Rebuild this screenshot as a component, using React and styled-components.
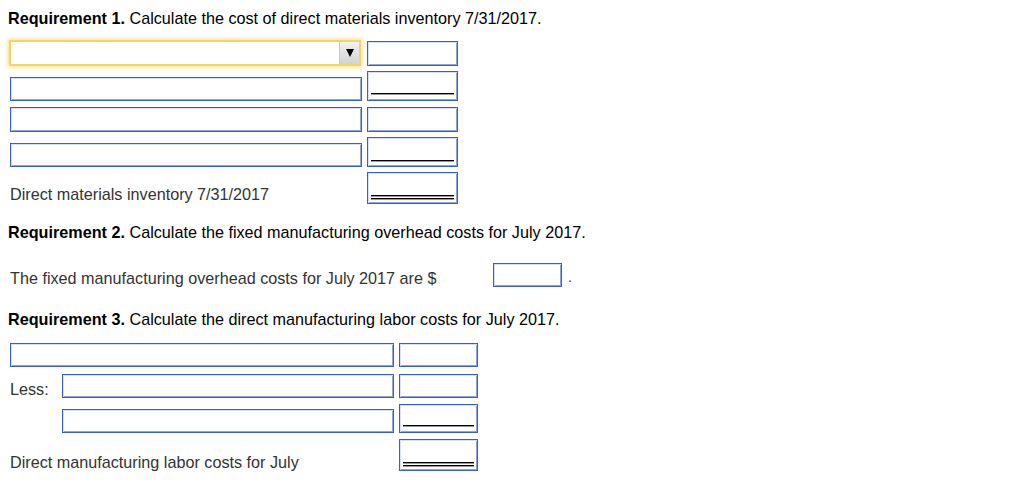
import React from 'react';
import styled, { createGlobalStyle } from 'styled-components';

const GlobalStyle = createGlobalStyle`
  html, body {
    margin: 0;
    padding: 0;
    background: #fff;
  }
  body {
    font-family: "Liberation Sans", Arial, Helvetica, sans-serif;
    color: #000;
  }
`;

const Page = styled.div`
  width: 1024px;
  height: 489px;
  box-sizing: border-box;
  padding: 9px 0 0 8px;
  overflow: hidden;
`;

const Heading = styled.div`
  font-size: 16.2px;
  line-height: 18px;
  margin-top: ${p => p.$top || 0}px;
  white-space: nowrap;
  b {
    font-weight: bold;
  }
`;

const Sheet = styled.div`
  display: grid;
  grid-template-columns: ${p => p.$cols};
  column-gap: 5px;
  align-items: end;
  margin-top: ${p => p.$top || 0}px;
  padding-left: 2px;
`;

const Cell = styled.div`
  display: flex;
  align-items: end;
  grid-column: ${p => p.$span || 'auto'};
  height: ${p => p.$h || 25}px;
  margin-top: ${p => p.$gap || 0}px;
`;

const Label = styled.div`
  font-size: 16.2px;
  line-height: 18px;
  color: #333;
  white-space: nowrap;
  padding-bottom: ${p => p.$pb || 0}px;
`;

const TextBox = styled.div`
  box-sizing: border-box;
  width: ${p => p.$w ? `${p.$w}px` : '100%'};
  height: ${p => p.$h || 24}px;
  border: 1px solid #3a5ec7;
  box-shadow: inset 1px 1px 0 #d7e0f6, inset -1px -1px 0 #8ea5e0;
  background: #fff;
  position: relative;
`;

const Amount = styled(TextBox)`
  width: 100%;
  height: ${p => p.$h || 25}px;
`;

const Rule = styled.div`
  position: absolute;
  left: 3px;
  right: 3px;
  bottom: ${p => p.$bottom}px;
  height: 1px;
  background: #000;
  box-shadow: 0 1px 0 #9a9a9a;
`;

const SelectBox = styled.div`
  box-sizing: border-box;
  width: 100%;
  height: 26px;
  margin-left: -1px;
  border: 2px solid #f3d66a;
  box-shadow: 0 0 4px 1px rgba(245, 215, 90, 0.8);
  background: #fff;
  display: flex;
  justify-content: flex-end;
  align-items: stretch;
`;

const DropButton = styled.div`
  width: 19px;
  display: flex;
  align-items: center;
  justify-content: center;
  background: linear-gradient(#f2f2f2, #d2d2d2);
  border-left: 1px solid #c8c8c8;
`;

const Arrow = styled.span`
  width: 0;
  height: 0;
  border-left: 4px solid transparent;
  border-right: 4px solid transparent;
  border-top: 8px solid #000;
`;

const SentenceRow = styled.div`
  display: flex;
  align-items: center;
  margin-top: ${p => p.$top || 0}px;
  padding-left: 2px;
`;

const Sentence = styled(Label)`
  width: 483px;
  padding-top: 5px;
`;

const Dot = styled.span`
  font-size: 14px;
  color: #333;
  margin-left: 6px;
  padding-top: 4px;
`;

export default function App() {
  return (
    <Page>
      <GlobalStyle />
      <Heading>
        <b>Requirement 1.</b> Calculate the cost of direct materials inventory 7/31/2017.
      </Heading>

      <Sheet $cols="352px 91px" $top={14}>
        <Cell $h={25}>
          <SelectBox>
            <DropButton><Arrow /></DropButton>
          </SelectBox>
        </Cell>
        <Cell $h={25}><Amount /></Cell>

        <Cell $h={30} $gap={5}><TextBox /></Cell>
        <Cell $h={30} $gap={5}>
          <Amount $h={30}><Rule $bottom={6} /></Amount>
        </Cell>

        <Cell $h={25} $gap={6}><TextBox $h={25} /></Cell>
        <Cell $h={25} $gap={6}><Amount /></Cell>

        <Cell $h={30} $gap={5}><TextBox /></Cell>
        <Cell $h={30} $gap={5}>
          <Amount $h={30}><Rule $bottom={5} /></Amount>
        </Cell>

        <Cell $h={32} $gap={5}>
          <Label $pb={1}>Direct materials inventory 7/31/2017</Label>
        </Cell>
        <Cell $h={32} $gap={5}>
          <Amount $h={32}>
            <Rule $bottom={7} />
            <Rule $bottom={4} />
          </Amount>
        </Cell>
      </Sheet>

      <Heading $top={19}>
        <b>Requirement 2.</b> Calculate the fixed manufacturing overhead costs for July 2017.
      </Heading>

      <SentenceRow $top={22}>
        <Sentence>The fixed manufacturing overhead costs for July 2017 are $</Sentence>
        <TextBox $w={69} $h={24} />
        <Dot>.</Dot>
      </SentenceRow>

      <Heading $top={23}>
        <b>Requirement 3.</b> Calculate the direct manufacturing labor costs for July 2017.
      </Heading>

      <Sheet $cols="47px 332px 79px" $top={15}>
        <Cell $span="1 / 3" $h={24}><TextBox /></Cell>
        <Cell $h={24}><Amount $h={24} /></Cell>

        <Cell $h={24} $gap={7}>
          <Label>Less:</Label>
        </Cell>
        <Cell $h={24} $gap={7}><TextBox /></Cell>
        <Cell $h={24} $gap={7}><Amount $h={24} /></Cell>

        <Cell $h={29} $gap={6} />
        <Cell $h={29} $gap={6}><TextBox /></Cell>
        <Cell $h={29} $gap={6}>
          <Amount $h={29}><Rule $bottom={6} /></Amount>
        </Cell>

        <Cell $span="1 / 3" $h={32} $gap={6}>
          <Label>Direct manufacturing labor costs for July</Label>
        </Cell>
        <Cell $h={32} $gap={6}>
          <Amount $h={32}>
            <Rule $bottom={7} />
            <Rule $bottom={4} />
          </Amount>
        </Cell>
      </Sheet>
    </Page>
  );
}
